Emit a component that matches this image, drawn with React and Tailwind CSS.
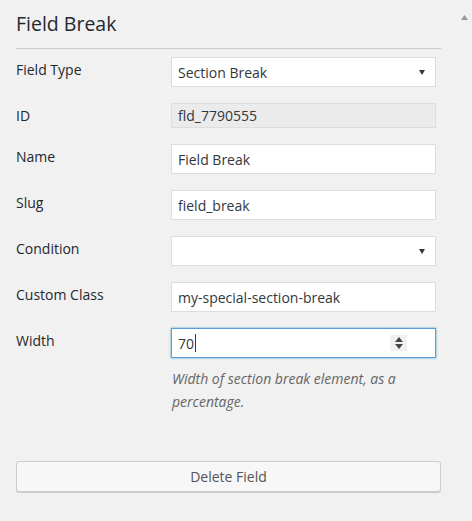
export default function App() {
  const font = { fontFamily: '"Open Sans", "Noto Sans", sans-serif' };
  const Label = ({ children }) => (
    <div className="w-[155px] shrink-0 pt-[3px] text-[14px] leading-5 text-[#23282d]">{children}</div>
  );
  const inputCls =
    "w-[265px] h-[30px] border border-[#dddddd] bg-white px-[6px] text-[14px] text-[#32373c] flex items-center";
  return (
    <div className="relative w-[472px] h-[521px] bg-[#f1f1f1] overflow-hidden" style={font}>
      <svg className="absolute left-[461px] top-[15px]" width="7" height="5" viewBox="0 0 7 5">
        <polygon points="3.5,0 7,5 0,5" fill="#999999" />
      </svg>
      <div className="w-[425px] ml-4 pt-[11px]">
        <h2 className="text-[19.5px] leading-[26px] text-[#23282d] pb-[11px] border-b border-[#cccccc]">
          Field Break
        </h2>
        <div className="flex flex-col gap-4 pt-2">
          <div className="flex items-start">
            <Label>Field Type</Label>
            <div className={inputCls + " justify-between pr-[10px]"}>
              <span>Section Break</span>
              <svg width="6" height="5" viewBox="0 0 6 5">
                <polygon points="0,0 6,0 3,5" fill="#32373c" />
              </svg>
            </div>
          </div>
          <div className="flex items-start">
            <Label>ID</Label>
            <div className="w-[265px] h-[25px] border border-[#dddddd] bg-[#ebebeb] px-[6px] text-[14px] text-[#32373c] flex items-center">
              fld_7790555
            </div>
          </div>
          <div className="flex items-start">
            <Label>Name</Label>
            <div className={inputCls}>Field Break</div>
          </div>
          <div className="flex items-start">
            <Label>Slug</Label>
            <div className={inputCls}>field_break</div>
          </div>
          <div className="flex items-start">
            <Label>Condition</Label>
            <div className={inputCls + " justify-end pr-[10px]"}>
              <svg width="6" height="5" viewBox="0 0 6 5">
                <polygon points="0,0 6,0 3,5" fill="#32373c" />
              </svg>
            </div>
          </div>
          <div className="flex items-start">
            <Label>Custom Class</Label>
            <div className={inputCls}>my-special-section-break</div>
          </div>
          <div className="flex items-start">
            <Label>Width</Label>
            <div className="w-[265px]">
              <div className="w-[265px] h-[30px] border border-[#5b9dd9] shadow-[0_0_2px_rgba(30,140,190,0.8)] bg-white pl-[6px] pr-[28px] text-[14px] text-[#32373c] flex items-center justify-between">
                <span className="flex items-center">
                  70<span className="inline-block w-px h-[18px] bg-[#32373c] ml-[1px]"></span>
                </span>
                <span className="w-[17px] h-[16px] bg-[#f0f0f0] flex flex-col items-center justify-center gap-[2px]">
                  <svg width="8" height="5" viewBox="0 0 8 5">
                    <polygon points="4,0 8,5 0,5" fill="#444444" />
                  </svg>
                  <svg width="8" height="5" viewBox="0 0 8 5">
                    <polygon points="0,0 8,0 4,5" fill="#444444" />
                  </svg>
                </span>
              </div>
              <p className="mt-[9px] pl-[1px] text-[14px] leading-[23px] italic text-[#666666]">
                Width of section break element, as a percentage.
              </p>
            </div>
          </div>
        </div>
        <button className="mt-[48px] w-[425px] h-[31px] border border-[#cccccc] rounded-[3px] bg-[#f7f7f7] shadow-[0_1px_0_#cccccc] text-[14px] text-[#555555]">
          Delete Field
        </button>
      </div>
    </div>
  );
}
